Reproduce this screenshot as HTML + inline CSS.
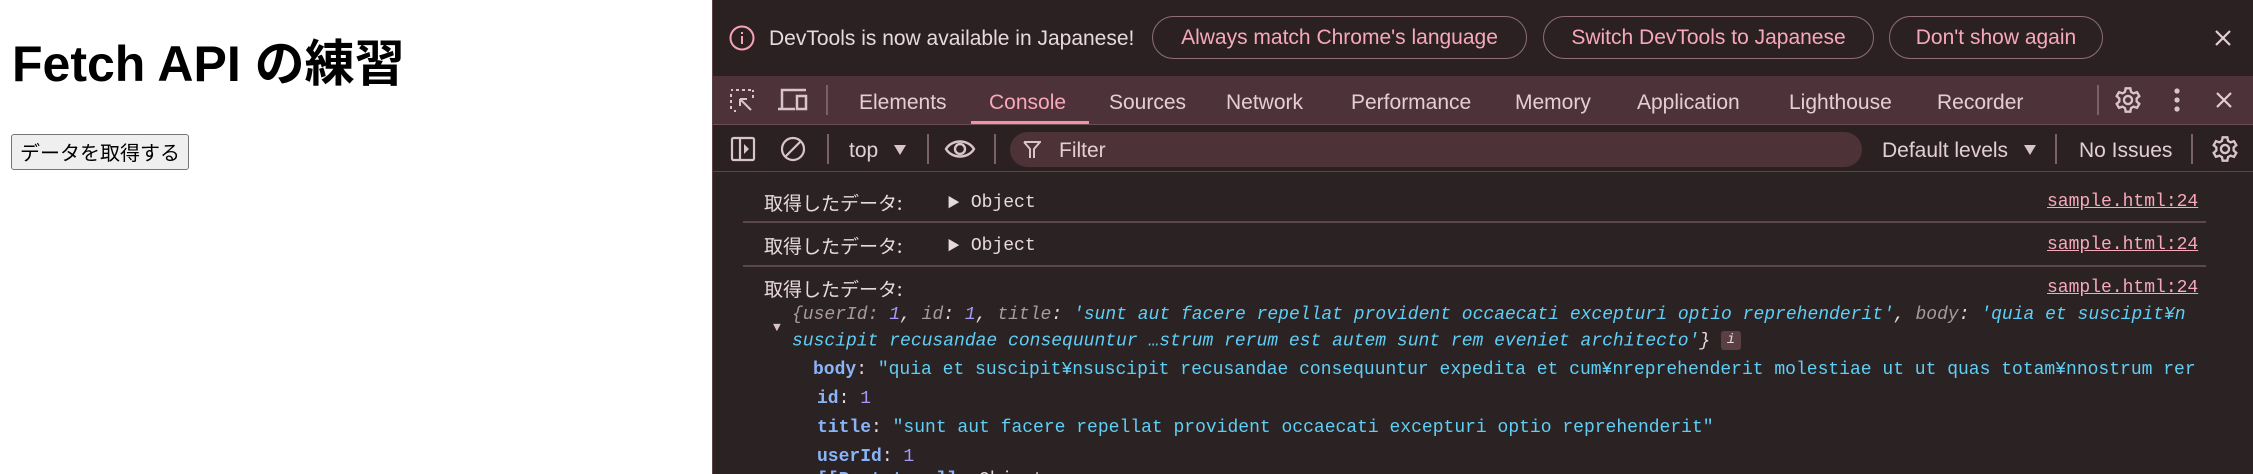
<!DOCTYPE html>
<html style="overflow:hidden;width:2253px;height:474px"><head><meta charset="utf-8">
<style>
*{margin:0;padding:0;box-sizing:border-box}
body{width:2253px;height:474px;overflow:hidden;background:#fff;position:relative;font-family:"Liberation Sans","Noto Sans CJK JP",sans-serif}
.a{position:absolute;white-space:nowrap}
h1{position:absolute;left:12px;top:34px;font-size:50px;font-weight:bold;color:#000;line-height:60px;font-family:"Liberation Sans","Noto Sans CJK JP",sans-serif}
.btn{position:absolute;left:11px;top:134px;width:178px;height:36px;background:#efefef;border:1px solid #767676;border-radius:3px;font-size:20px;line-height:34px;text-align:center;color:#000;font-family:"Noto Sans CJK JP",sans-serif}
#dt{position:absolute;left:712px;top:0;width:1541px;height:474px;overflow:hidden;background:#2b2224;border-left:1px solid #5a4448}
.info{position:absolute;left:0;top:0;width:100%;height:76px;background:#2b2123}
.tabs{position:absolute;left:0;top:76px;width:100%;height:49px;background:#4e3239;border-bottom:1px solid #6a4e54}
.tool{position:absolute;left:0;top:125px;width:100%;height:47px;background:#2b2123;border-bottom:1px solid #5a4448}
.t{font-size:21px;color:#e3cfd3}
.pb{position:absolute;top:16px;height:43px;border:1.5px solid #8e6f76;border-radius:22px;color:#f7a8bb;font-size:21px;line-height:42px;text-align:center}
.div{position:absolute;width:1.5px;background:#7a6166}
.con{font-family:"Liberation Mono","Noto Sans CJK JP",monospace;font-size:18px;color:#e8d9dc}
.jp{font-family:"Noto Sans CJK JP",sans-serif;font-size:19px;color:#e8d9dc}
.sep{position:absolute;left:30px;width:1463px;height:1.5px;background:#5e474c}
.lnk{position:absolute;left:1334px;color:#f7a8bb;text-decoration:underline;font-family:"Liberation Mono",monospace;font-size:18px}
.g{color:#a89a9d;font-style:italic}
.n{color:#a59af5}
.s{color:#5fcff5}
.k{color:#8ab4f8;font-weight:bold}
</style></head><body>
<h1>Fetch API の練習</h1>
<div class="btn">データを取得する</div>
<div id="dt">
 <div class="info">
  <svg class="a" style="left:15px;top:24px" width="28" height="28" viewBox="0 0 28 28"><circle cx="14" cy="14" r="11.5" fill="none" stroke="#f5a3b6" stroke-width="2"/><rect x="13" y="12" width="2" height="8" fill="#f5a3b6"/><rect x="13" y="8" width="2" height="2" fill="#f5a3b6"/></svg>
  <div class="a t" style="left:56px;top:27px;color:#e8d9dc">DevTools is now available in Japanese!</div>
  <div class="pb" style="left:439px;width:375px">Always match Chrome's language</div>
  <div class="pb" style="left:830px;width:331px">Switch DevTools to Japanese</div>
  <div class="pb" style="left:1176px;width:214px">Don't show again</div>
  <svg class="a" style="left:1500px;top:28px" width="20" height="20" viewBox="0 0 20 20"><path d="M3 3L17 17M17 3L3 17" stroke="#e3cfd3" stroke-width="2.2"/></svg>
 </div>
 <div class="tabs">
  <svg class="a" style="left:17px;top:11px" width="26" height="26" viewBox="0 0 26 26" fill="none" stroke="#d9c5c9" stroke-width="2"><path d="M1 3h2M6 3h3M12 3h3M18 3h3M23 3v2M1 7v3M1 13v3M1 19v3M4 24h2M23 8v3" /><path d="M10 12l11 11M10 12h7M10 12v7"/></svg>
  <svg class="a" style="left:64px;top:11px" width="32" height="26" viewBox="0 0 32 26" fill="none" stroke="#d9c5c9" stroke-width="2.5"><path d="M5 21V3h24M1 22h17"/><rect x="20" y="9" width="9" height="13"/></svg>
  <div class="div" style="left:113px;top:9px;height:30px"></div>
  <div class="a t" style="left:146px;top:15px">Elements</div>
  <div class="a t" style="left:276px;top:15px;color:#f7a8bb">Console</div>
  <div class="a" style="left:258px;top:45px;width:118px;height:3px;background:#f093a8"></div>
  <div class="a t" style="left:396px;top:15px">Sources</div>
  <div class="a t" style="left:513px;top:15px">Network</div>
  <div class="a t" style="left:638px;top:15px">Performance</div>
  <div class="a t" style="left:802px;top:15px">Memory</div>
  <div class="a t" style="left:924px;top:15px">Application</div>
  <div class="a t" style="left:1076px;top:15px">Lighthouse</div>
  <div class="a t" style="left:1224px;top:15px">Recorder</div>
  <div class="div" style="left:1384px;top:9px;height:30px"></div>
  <svg class="a" style="left:1401px;top:10px" width="28" height="28" viewBox="0 0 24 24" fill="none" stroke="#d9c5c9" stroke-width="2"><circle cx="12" cy="12" r="3.5"/><path d="M10 2h4l.6 3 2.2 1.3 2.9-1 2 3.4-2.3 2v2.6l2.3 2-2 3.4-2.9-1L14.6 19l-.6 3h-4l-.6-3-2.2-1.3-2.9 1-2-3.4 2.3-2v-2.6l-2.3-2 2-3.4 2.9 1L9.4 5z"/></svg>
  <svg class="a" style="left:1460px;top:11px" width="8" height="26" viewBox="0 0 8 26" fill="#d9c5c9"><circle cx="4" cy="4" r="2.6"/><circle cx="4" cy="13" r="2.6"/><circle cx="4" cy="22" r="2.6"/></svg>
  <svg class="a" style="left:1501px;top:14px" width="20" height="20" viewBox="0 0 20 20"><path d="M3 3L17 17M17 3L3 17" stroke="#e3cfd3" stroke-width="2.2"/></svg>
 </div>
 <div class="tool">
  <svg class="a" style="left:17px;top:11px" width="26" height="26" viewBox="0 0 26 26" fill="none" stroke="#d9c5c9" stroke-width="2.2"><rect x="2" y="2" width="22" height="22" rx="1.5"/><path d="M10 2v22"/><path d="M14 8l5 5-5 5z" fill="#d9c5c9" stroke="none"/></svg>
  <svg class="a" style="left:67px;top:11px" width="26" height="26" viewBox="0 0 26 26" fill="none" stroke="#d9c5c9" stroke-width="2.2"><circle cx="13" cy="13" r="11"/><path d="M5 21L21 5"/></svg>
  <div class="div" style="left:114px;top:9px;height:30px"></div>
  <div class="a t" style="left:136px;top:14px">top</div>
  <svg class="a" style="left:180px;top:19px" width="14" height="12" viewBox="0 0 14 12"><path d="M1 1h12L7 11z" fill="#d9c5c9"/></svg>
  <div class="div" style="left:214px;top:9px;height:30px"></div>
  <svg class="a" style="left:231px;top:11px" width="32" height="26" viewBox="0 0 32 26" fill="none" stroke="#d9c5c9" stroke-width="2.4"><path d="M2 13C8 3 24 3 30 13C24 23 8 23 2 13z"/><circle cx="16" cy="13" r="5"/></svg>
  <div class="div" style="left:281px;top:9px;height:30px"></div>
  <div class="a" style="left:297px;top:7px;width:852px;height:35px;background:#4d3237;border-radius:18px"></div>
  <svg class="a" style="left:310px;top:15px" width="18" height="20" viewBox="0 0 18 20" fill="none" stroke="#d9c5c9" stroke-width="2"><path d="M1 2h16l-6 7v9M7 18V9L1 2"/></svg>
  <div class="a t" style="left:346px;top:14px">Filter</div>
  <div class="a t" style="left:1169px;top:14px">Default levels</div>
  <svg class="a" style="left:1310px;top:19px" width="14" height="12" viewBox="0 0 14 12"><path d="M1 1h12L7 11z" fill="#d9c5c9"/></svg>
  <div class="div" style="left:1342px;top:9px;height:30px"></div>
  <div class="a t" style="left:1366px;top:14px">No Issues</div>
  <div class="div" style="left:1478px;top:9px;height:30px"></div>
  <svg class="a" style="left:1498px;top:10px" width="28" height="28" viewBox="0 0 24 24" fill="none" stroke="#d9c5c9" stroke-width="2"><circle cx="12" cy="12" r="3.5"/><path d="M10 2h4l.6 3 2.2 1.3 2.9-1 2 3.4-2.3 2v2.6l2.3 2-2 3.4-2.9-1L14.6 19l-.6 3h-4l-.6-3-2.2-1.3-2.9 1-2-3.4 2.3-2v-2.6l-2.3-2 2-3.4 2.9 1L9.4 5z"/></svg>
 </div>
 <!-- console -->
 <div class="a jp" style="left:51px;top:189px">取得したデータ:</div>
 <div class="a con" style="left:234px;top:192px"><span style="font-size:13px">▶</span> Object</div>
 <div class="lnk" style="top:192px">sample.html:24</div>
 <div class="sep" style="top:221px"></div>
 <div class="a jp" style="left:51px;top:232px">取得したデータ:</div>
 <div class="a con" style="left:234px;top:235px"><span style="font-size:13px">▶</span> Object</div>
 <div class="lnk" style="top:235px">sample.html:24</div>
 <div class="sep" style="top:265px"></div>
 <div class="a jp" style="left:51px;top:275px">取得したデータ:</div>
 <div class="lnk" style="top:278px">sample.html:24</div>
 <div class="a con" style="left:60px;top:320px;font-size:13px;color:#d9c5c9">▼</div>
 <div class="a con" style="left:79px;top:305px;font-style:italic"><span class="g">{userId</span><span class="g">:</span> <span class="n">1</span>, <span class="g">id</span>: <span class="n">1</span>, <span class="g">title</span>: <span class="s">'sunt aut facere repellat provident occaecati excepturi optio reprehenderit'</span>, <span class="g">body</span>: <span class="s">'quia et suscipit¥n</span></div>
 <div class="a con" style="left:79px;top:331px;font-style:italic"><span class="s">suscipit recusandae consequuntur …strum rerum est autem sunt rem eveniet architecto'</span>} <span style="display:inline-block;width:20px;height:19px;background:#5a3f44;border-radius:3px;font-size:14px;text-align:center;line-height:19px;vertical-align:middle">i</span></div>
 <div class="a con" style="left:100px;top:360px;width:1440px;overflow:hidden"><span class="k">body</span>: <span class="s">"quia et suscipit¥nsuscipit recusandae consequuntur expedita et cum¥nreprehenderit molestiae ut ut quas totam¥nnostrum rer</span></div>
 <div class="a con" style="left:104px;top:389px"><span class="k">id</span>: <span class="n">1</span></div>
 <div class="a con" style="left:104px;top:418px"><span class="k">title</span>: <span class="s">"sunt aut facere repellat provident occaecati excepturi optio reprehenderit"</span></div>
 <div class="a con" style="left:104px;top:447px"><span class="k">userId</span>: <span class="n">1</span></div>
 <div class="a con" style="left:104px;top:470px"><span class="k">[[Prototype]]</span>: Object</div>
</div>
</body></html>
